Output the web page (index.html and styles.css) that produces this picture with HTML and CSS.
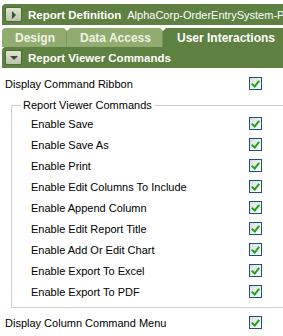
FILE: index.html
```html
<!DOCTYPE html>
<html>
<head lang="en">
    <meta charset="UTF-8">
    <title>Report Definition</title>
    <link rel="stylesheet" href="styles.css">
</head>
<body>
<div id="page">
    <div class="bar title-bar">
        <span class="btn"><span class="tri-right"></span></span>
        <b>Report Definition</b>
        <span class="name">AlphaCorp-OrderEntrySystem-Products</span>
    </div>
    <ul id="tabs">
        <li>Design</li>
        <li>Data Access</li>
        <li class="selected">User Interactions</li>
    </ul>
    <div class="bar section-bar">
        <span class="btn"><span class="tri-down"></span></span>
        <b>Report Viewer Commands</b>
    </div>
    <div id="content">
        <div class="row top">
            <span>Display Command Ribbon</span>
            <span class="check"></span>
        </div>
        <fieldset class="group">
            <legend>Report Viewer Commands</legend>
            <div class="row"><span>Enable Save</span><span class="check"></span></div>
            <div class="row"><span>Enable Save As</span><span class="check"></span></div>
            <div class="row"><span>Enable Print</span><span class="check"></span></div>
            <div class="row"><span>Enable Edit Columns To Include</span><span class="check"></span></div>
            <div class="row"><span>Enable Append Column</span><span class="check"></span></div>
            <div class="row"><span>Enable Edit Report Title</span><span class="check"></span></div>
            <div class="row"><span>Enable Add Or Edit Chart</span><span class="check"></span></div>
            <div class="row"><span>Enable Export To Excel</span><span class="check"></span></div>
            <div class="row"><span>Enable Export To PDF</span><span class="check"></span></div>
        </fieldset>
        <div class="row bottom">
            <span>Display Column Command Menu</span>
            <span class="check"></span>
        </div>
    </div>
</div>
</body>
</html>
```

FILE: styles.css
```css
*{
    margin: 0;
    padding: 0;
    box-sizing: border-box;
}
ul,ol{
    list-style: none;
}
body{
    width: 283px;
    height: 336px;
    overflow: hidden;
    background: #fff;
    font-family: "Liberation Sans", Arial, sans-serif;
    font-size: 11px;
    color: #000;
}
#page{
    padding: 4px 0 0 2px;
}
.bar{
    display: flex;
    align-items: center;
    background: #5e8141;
    color: #fff;
    white-space: nowrap;
    overflow: hidden;
    border-radius: 4px 0 0 0;
}
.title-bar{
    height: 21px;
}
.title-bar b{
    margin-left: 6px;
    font-size: 11.5px;
}
.title-bar .name{
    margin-left: 6px;
    font-size: 11px;
}
.section-bar{
    height: 21px;
}
.section-bar b{
    margin-left: 6px;
    font-size: 11.5px;
}
.btn{
    flex: none;
    width: 17px;
    height: 15px;
    margin-left: 3px;
    border-radius: 2px;
    background: linear-gradient(#dfe5d4, #b9c3a8);
    border: 1px solid #4d6c34;
    display: flex;
    align-items: center;
    justify-content: center;
}
.tri-right{
    width: 0;
    height: 0;
    border-top: 4px solid transparent;
    border-bottom: 4px solid transparent;
    border-left: 4px solid #3f4a36;
}
.tri-down{
    width: 0;
    height: 0;
    border-left: 4px solid transparent;
    border-right: 4px solid transparent;
    border-top: 4px solid #3f4a36;
}
#tabs{
    display: flex;
    height: 19px;
    margin-top: 3px;
    font-weight: bold;
    font-size: 12px;
    white-space: nowrap;
}
#tabs li{
    display: flex;
    align-items: center;
    padding: 0 13px;
    background: #90ac6f;
    color: #eef3e4;
    border-right: 1px solid #779857;
    position: relative;
}
#tabs li:first-child{
    width: 65px;
    border-radius: 4px 0 0 0;
}
#tabs li:nth-child(2){
    width: 96px;
}
#tabs li + li::before{
    content: "";
    position: absolute;
    left: -3px;
    top: 0;
    border-left: 3px solid transparent;
    border-right: 3px solid transparent;
    border-top: 3px solid #fff;
}
#tabs .selected{
    background: #5e8141;
    color: #fff;
    border-right: none;
    flex: 1;
    padding-left: 14px;
}
#content{
    padding: 0 0 0 3px;
}
.row{
    display: flex;
    justify-content: space-between;
    align-items: center;
    height: 21px;
    padding-right: 21px;
}
.row.top{
    margin-top: 5px;
}
.group{
    border: none;
    border-top: 1px solid #d0d0c8;
    border-left: 1px solid #d0d0c8;
    border-bottom: 1px solid #d0d0c8;
    margin: 6px 0 0 6px;
    padding: 2px 0 5px 0;
}
.group legend{
    margin-left: 9px;
    padding: 0 2px;
    line-height: 11px;
}
.group .row{
    padding-left: 19px;
}
.check{
    flex: none;
    width: 13px;
    height: 13px;
    border: 1px solid #1c5180;
    background: linear-gradient(135deg, #dcdcd7, #fff);
    position: relative;
}
.check::after{
    content: "";
    position: absolute;
    left: 3px;
    top: 1px;
    width: 3px;
    height: 6px;
    border-right: 2px solid #21a121;
    border-bottom: 2px solid #21a121;
    transform: rotate(40deg);
}
.row.bottom{
    margin-top: 4px;
}
```
